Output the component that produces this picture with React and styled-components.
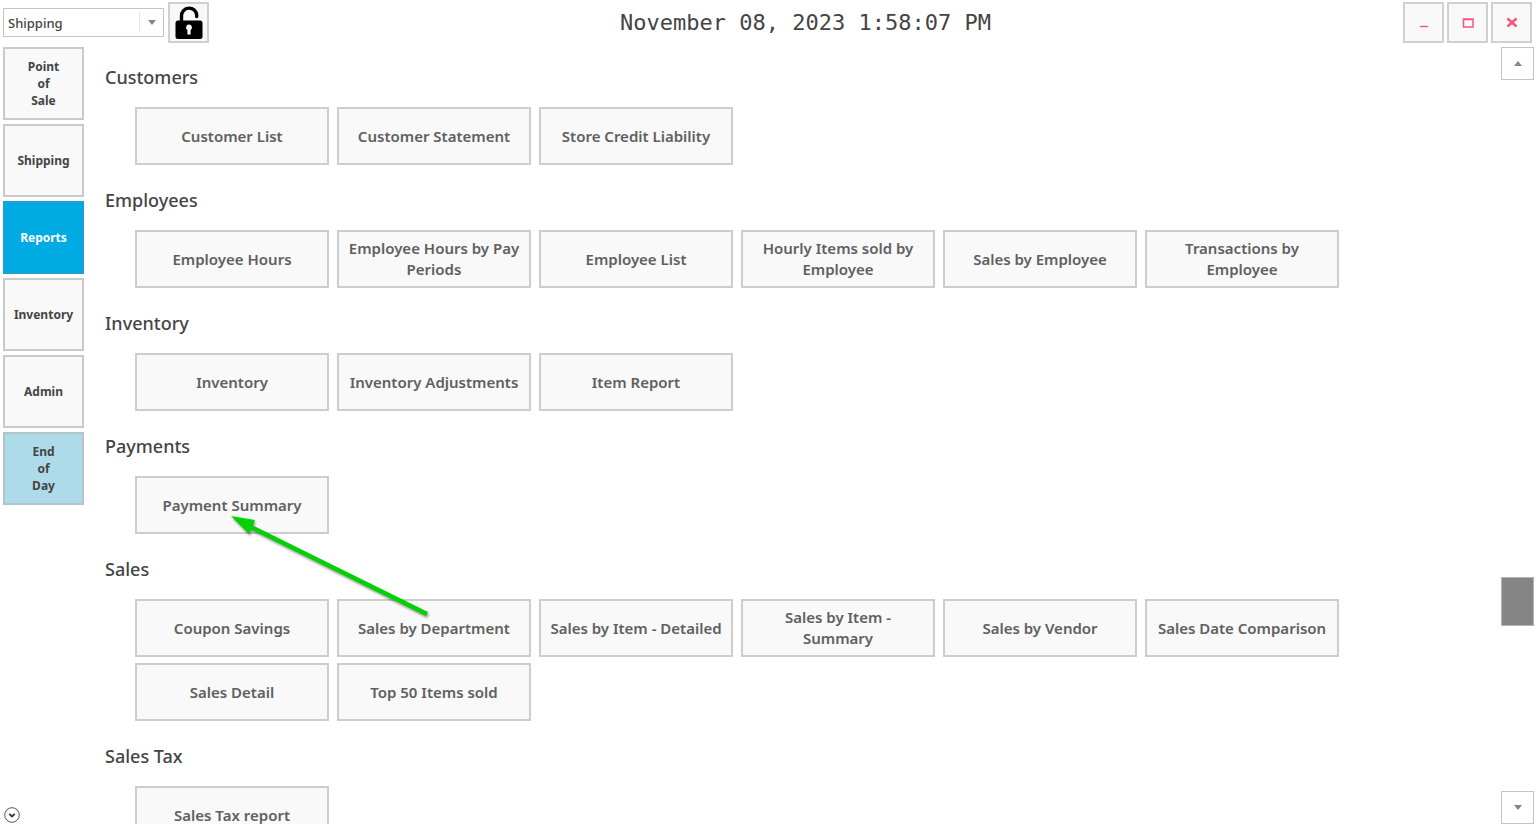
import React from 'react';
import styled, { createGlobalStyle } from 'styled-components';

const sections = [
  {
    title: 'Customers',
    reports: ['Customer List', 'Customer Statement', 'Store Credit Liability'],
  },
  {
    title: 'Employees',
    reports: [
      'Employee Hours',
      'Employee Hours by Pay Periods',
      'Employee List',
      'Hourly Items sold by Employee',
      'Sales by Employee',
      'Transactions by Employee',
    ],
  },
  {
    title: 'Inventory',
    reports: ['Inventory', 'Inventory Adjustments', 'Item Report'],
  },
  { title: 'Payments', reports: ['Payment Summary'], pointed: true },
  {
    title: 'Sales',
    reports: [
      'Coupon Savings',
      'Sales by Department',
      'Sales by Item - Detailed',
      'Sales by Item - Summary',
      'Sales by Vendor',
      'Sales Date Comparison',
      'Sales Detail',
      'Top 50 Items sold',
    ],
  },
  { title: 'Sales Tax', reports: ['Sales Tax report'] },
];

const tabs = [
  { label: 'Point of Sale' },
  { label: 'Shipping' },
  { label: 'Reports', tone: 'active' },
  { label: 'Inventory' },
  { label: 'Admin' },
  { label: 'End of Day', tone: 'light' },
];

function App() {
  return (
    <Page>
      <GlobalStyle />
      <TopBar>
        <TopLeft>
          <SelectBox>
            <Select aria-label="Department" defaultValue="Shipping">
              <option>Shipping</option>
              <option>Reports</option>
              <option>Inventory</option>
            </Select>
            <SelectArrow>
              <Triangle direction="down" />
            </SelectArrow>
          </SelectBox>
          <SquareButton aria-label="Unlock">
            <svg width="28" height="34" viewBox="0 0 28 34">
              <path
                d="M6.5 15V10a7.6 7.6 0 0 1 15.2-0.6V10.5"
                fill="none"
                stroke="#000"
                strokeWidth="3.4"
                strokeLinecap="round"
              />
              <rect x="0.5" y="14.5" width="27" height="18.5" rx="2.5" />
              <path
                d="M14 18.5a3 3 0 0 1 1.6 5.5V28.5h-3.2v-4.5A3 3 0 0 1 14 18.5z"
                fill="#fff"
              />
            </svg>
          </SquareButton>
        </TopLeft>
        <Clock>November 08, 2023 1:58:07 PM</Clock>
        <WindowButtons>
          <SquareButton aria-label="Minimize">
            <WindowIcon d="M3 10.5h8" />
          </SquareButton>
          <SquareButton aria-label="Maximize">
            <WindowIcon d="M2.5 3h9.5v8H2.5zM2 3.5h10.5" />
          </SquareButton>
          <SquareButton aria-label="Close">
            <WindowIcon d="M2.5 2.5l9 8M11.5 2.5l-9 8" width={2.6} />
          </SquareButton>
        </WindowButtons>
      </TopBar>

      <Body>
        <Sidebar>
          <Tabs>
            {tabs.map(({ label, tone }) => (
              <Tab key={label} $tone={tone}>
                <TabLabel>{label}</TabLabel>
              </Tab>
            ))}
          </Tabs>
          <MoreButton aria-label="Show more">
            <svg width="16" height="16" viewBox="0 0 16 16" fill="none">
              <circle cx="8" cy="8" r="7.3" stroke="#555" />
              <path d="M5.2 6.8L8 9.4l2.8-2.6" stroke="#333" strokeWidth="1.8" />
            </svg>
          </MoreButton>
        </Sidebar>

        <Content>
          {sections.map(({ title, reports, pointed }) => (
            <section key={title}>
              <SectionTitle>{title}</SectionTitle>
              <ReportList>
                {reports.map(report => (
                  <ReportItem key={report}>
                    <ReportButton>{report}</ReportButton>
                    {pointed && <Pointer />}
                  </ReportItem>
                ))}
              </ReportList>
            </section>
          ))}
        </Content>

        <ScrollBar>
          <ScrollButton aria-label="Scroll up">
            <Triangle direction="up" />
          </ScrollButton>
          <Track $grow={3} />
          <Thumb />
          <Track $grow={1} />
          <ScrollButton aria-label="Scroll down">
            <Triangle direction="down" />
          </ScrollButton>
        </ScrollBar>
      </Body>
    </Page>
  );
}

function Triangle({ direction }) {
  return (
    <svg width="8" height="5" viewBox="0 0 8 5" fill="#858585">
      <path d={direction === 'up' ? 'M0 5l4-5 4 5z' : 'M0 0h8L4 5z'} />
    </svg>
  );
}

function WindowIcon({ d, width = 1.5 }) {
  return (
    <svg width="14" height="14" viewBox="0 0 14 14" fill="none">
      <path d={d} stroke="#f7567c" strokeWidth={width} />
    </svg>
  );
}

function Pointer() {
  return (
    <PointerSvg width="206" height="108" viewBox="0 0 206 108">
      <path d="M20 11L196 98" stroke="#00d200" strokeWidth="4.4" />
      <path d="M0 0l24 4-6 14z" fill="#00d200" />
    </PointerSvg>
  );
}

const GlobalStyle = createGlobalStyle`
  * {
    box-sizing: border-box;
  }

  body {
    margin: 0;
    background-color: #fff;
    color: #444;
    font-family: 'Noto Sans', 'Open Sans', sans-serif;
  }

  button,
  select {
    margin: 0;
    padding: 0;
    color: inherit;
    font-family: inherit;
  }
`;

const Page = styled.div`
  display: flex;
  flex-direction: column;
  height: 100vh;
  padding: 2px 2px 3px 3px;
  overflow: hidden;
`;

const TopBar = styled.header`
  display: grid;
  grid-template-columns: 1fr auto 1fr;
  align-items: center;
  padding-right: 2px;
`;

const TopLeft = styled.div`
  display: flex;
  align-items: center;
  gap: 4px;
`;

const SelectBox = styled.div`
  display: grid;
  width: 161px;
  height: 29px;
  border: 1px solid #c4c4c4;
`;

const Select = styled.select`
  grid-area: 1 / 1;
  appearance: none;
  padding-left: 4px;
  border: 0;
  background-color: #fff;
  font-size: 13px;
  font-weight: 500;
`;

const SelectArrow = styled.span`
  grid-area: 1 / 1;
  display: flex;
  align-items: center;
  justify-content: center;
  justify-self: end;
  width: 24px;
  margin: 3px 0;
  border-left: 1px solid #e4e4e4;
  pointer-events: none;
`;

const SquareButton = styled.button`
  display: flex;
  align-items: center;
  justify-content: center;
  width: 41px;
  height: 41px;
  border: 2px solid #d0d0d0;
  background-color: #f9f9f9;
`;

const Clock = styled.time`
  color: #444;
  font-family: 'DejaVu Sans Mono', monospace;
  font-size: 22px;
  line-height: 28px;
  margin-left: 76px;
`;

const WindowButtons = styled.div`
  display: flex;
  justify-content: flex-end;
  gap: 3px;
`;

const Body = styled.div`
  display: flex;
  flex: 1;
  min-height: 0;
  padding-top: 4px;
`;

const Sidebar = styled.nav`
  display: flex;
  flex-direction: column;
  justify-content: space-between;
  width: 81px;
`;

const Tabs = styled.div`
  display: flex;
  flex-direction: column;
  gap: 4px;
`;

const Tab = styled.button`
  display: flex;
  align-items: center;
  justify-content: center;
  height: 73px;
  border: 2px solid #cacaca;
  background-color: #f9f9f9;
  color: #444;
  font-size: 12px;
  font-weight: 700;
  line-height: 17px;
  ${props => {
    if (props.$tone === 'active') {
      return `
        border-color: #1ba1d3;
        background-color: #00abe3;
        color: #fff;`;
    }
    if (props.$tone === 'light') {
      return `
        border-color: #b4c4ca;
        background-color: #addbe9;`;
    }
  }}
`;

/* one word per line */
const TabLabel = styled.span`
  width: min-content;
`;

const MoreButton = styled.button`
  align-self: flex-start;
  display: flex;
  padding: 1px;
  border: 0;
  background: none;
`;

const Content = styled.main`
  flex: 1;
  min-width: 0;
  padding: 14px 20px 0 21px;
  overflow: hidden;
`;

const SectionTitle = styled.h2`
  margin: 0;
  color: #444;
  font-size: 18px;
  font-weight: 500;
  line-height: 32px;
`;

const ReportList = styled.ul`
  display: flex;
  flex-wrap: wrap;
  gap: 6px 8px;
  margin: 0;
  padding: 14px 0 19px 30px;
  list-style: none;
`;

const ReportItem = styled.li`
  position: relative;
`;

const ReportButton = styled.button`
  width: 194px;
  height: 58px;
  padding: 0 7px;
  border: 2px solid #cdcdcd;
  background-color: #f9f9f9;
  color: #606060;
  font-size: 15px;
  font-weight: 600;
  line-height: 21px;
`;

const PointerSvg = styled.svg`
  position: absolute;
  top: 40px;
  left: 96px;
  z-index: 1;
  filter: drop-shadow(1px 2px 1px rgba(0, 0, 0, 0.4));
  pointer-events: none;
`;

const ScrollBar = styled.div`
  display: flex;
  flex-direction: column;
  width: 33px;
`;

const ScrollButton = styled.button`
  display: flex;
  align-items: center;
  justify-content: center;
  height: 33px;
  border: 1px solid #c4c4c4;
  background-color: #fff;
`;

const Track = styled.div`
  flex: ${props => props.$grow};
`;

const Thumb = styled.div`
  height: 49px;
  border: 1px solid #b4b4b4;
  background-color: #858585;
`;

export default App;
